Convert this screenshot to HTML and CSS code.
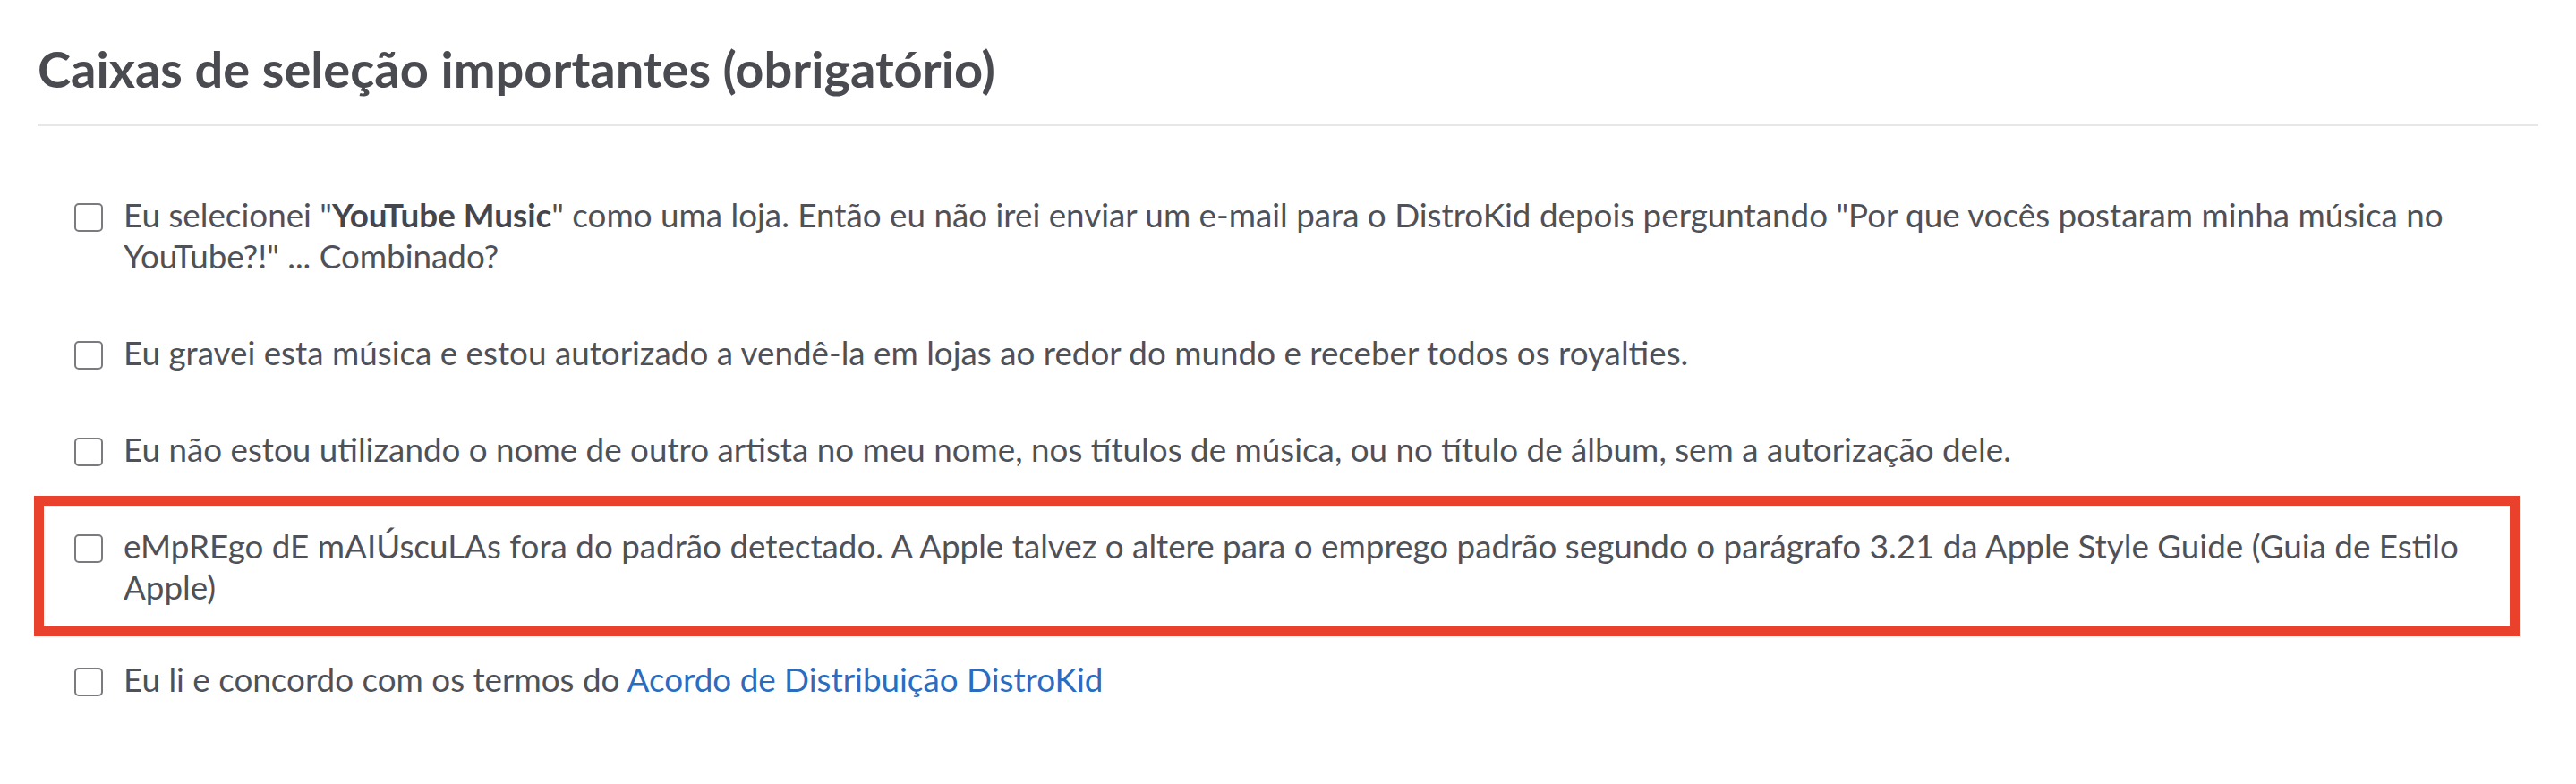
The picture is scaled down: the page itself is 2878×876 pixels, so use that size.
FILE: index.html
```html
<!DOCTYPE html>
<html lang="pt-BR">
<head>
  <meta charset="UTF-8" />
  <title>Caixas de seleção importantes</title>
  <link rel="stylesheet" href="styles.css">
</head>
<body>
  <div class="section">
    <h1>Caixas de seleção importantes (obrigatório)</h1>

    <div class="check-list">
      <label class="check-item">
        <input type="checkbox" class="check-box">
        <span class="check-text">Eu selecionei "<b>YouTube Music</b>" como uma loja. Então eu não irei enviar um e-mail para o DistroKid depois perguntando "Por que vocês postaram minha música no YouTube?!" ... Combinado?</span>
      </label>

      <label class="check-item">
        <input type="checkbox" class="check-box">
        <span class="check-text">Eu gravei esta música e estou autorizado a vendê-la em lojas ao redor do mundo e receber todos os royalties.</span>
      </label>

      <label class="check-item">
        <input type="checkbox" class="check-box">
        <span class="check-text">Eu não estou utilizando o nome de outro artista no meu nome, nos títulos de música, ou no título de álbum, sem a autorização dele.</span>
      </label>

      <label class="check-item flagged">
        <input type="checkbox" class="check-box">
        <span class="check-text">eMpREgo dE mAIÚscuLAs fora do padrão detectado. A Apple talvez o altere para o emprego padrão segundo o parágrafo 3.21 da Apple Style Guide (Guia de Estilo Apple)</span>
      </label>

      <label class="check-item">
        <input type="checkbox" class="check-box">
        <span class="check-text">Eu li e concordo com os termos do <a href="#" class="terms-link">Acordo de Distribuição DistroKid</a></span>
      </label>
    </div>
  </div>
</body>
</html>
```

FILE: styles.css
```css
body {
  margin: 0;
  background: #fff;
  font-family: Lato, "Open Sans", Arial, sans-serif;
  color: #4f5158;
}

.section {
  padding: 43px 42px 0 42px;
}

h1 {
  margin: 0;
  font-size: 56px;
  font-weight: 700;
  line-height: 1.2;
  color: #4a4b51;
  padding-bottom: 29px;
  border-bottom: 2px solid #e7e7ea;
}

.check-list {
  display: flex;
  flex-direction: column;
  gap: 62px;
  padding-top: 76px;
}

.check-item {
  display: flex;
  align-items: flex-start;
  gap: 23px;
  padding-left: 41px;
  font-size: 36.8px;
  line-height: 46px;
  cursor: pointer;
}

.check-box {
  appearance: none;
  -webkit-appearance: none;
  flex: none;
  width: 32px;
  height: 32px;
  margin: 10px 0 0 0;
  border: 2px solid #7a7b7f;
  border-radius: 5px;
  background: #fff;
  box-sizing: border-box;
}

.check-text b {
  font-weight: 700;
  color: #45464c;
}

.flagged {
  margin: -33px 21px -37px -4px;
  padding: 22px 10px 21px 34px;
  border: 11px solid #e9412b;
}

.terms-link {
  color: #2a6cc0;
  text-decoration: none;
}
```
